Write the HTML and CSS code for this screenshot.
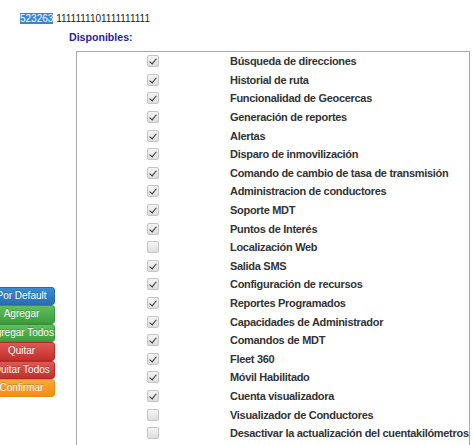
FILE: index.html
```html
<!DOCTYPE html>
<html>
<head>
<meta charset="utf-8">
<link rel="stylesheet" href="styles.css">
</head>
<body>
<div class="topline"><span class="sel">523263</span> 1111111101111111111</div>
<div class="title">Disponibles:</div>
<div class="main">
  <div class="btns">
    <div class="btn blue">Por Default</div>
    <div class="btn green">Agregar</div>
    <div class="btn green">Agregar Todos</div>
    <div class="btn red">Quitar</div>
    <div class="btn red">Quitar Todos</div>
    <div class="btn orange">Confirmar</div>
  </div>
  <div class="box">
    <div class="row"><span class="cb on"></span><span class="lbl">Búsqueda de direcciones</span></div>
    <div class="row"><span class="cb on"></span><span class="lbl">Historial de ruta</span></div>
    <div class="row"><span class="cb on"></span><span class="lbl">Funcionalidad de Geocercas</span></div>
    <div class="row"><span class="cb on"></span><span class="lbl">Generación de reportes</span></div>
    <div class="row"><span class="cb on"></span><span class="lbl">Alertas</span></div>
    <div class="row"><span class="cb on"></span><span class="lbl">Disparo de inmovilización</span></div>
    <div class="row"><span class="cb on"></span><span class="lbl">Comando de cambio de tasa de transmisión</span></div>
    <div class="row"><span class="cb on"></span><span class="lbl">Administracion de conductores</span></div>
    <div class="row"><span class="cb on"></span><span class="lbl">Soporte MDT</span></div>
    <div class="row"><span class="cb on"></span><span class="lbl">Puntos de Interés</span></div>
    <div class="row"><span class="cb"></span><span class="lbl">Localización Web</span></div>
    <div class="row"><span class="cb on"></span><span class="lbl">Salida SMS</span></div>
    <div class="row"><span class="cb on"></span><span class="lbl">Configuración de recursos</span></div>
    <div class="row"><span class="cb on"></span><span class="lbl">Reportes Programados</span></div>
    <div class="row"><span class="cb on"></span><span class="lbl">Capacidades de Administrador</span></div>
    <div class="row"><span class="cb on"></span><span class="lbl">Comandos de MDT</span></div>
    <div class="row"><span class="cb on"></span><span class="lbl">Fleet 360</span></div>
    <div class="row"><span class="cb on"></span><span class="lbl">Móvil Habilitado</span></div>
    <div class="row"><span class="cb on"></span><span class="lbl">Cuenta visualizadora</span></div>
    <div class="row"><span class="cb"></span><span class="lbl">Visualizador de Conductores</span></div>
    <div class="row"><span class="cb"></span><span class="lbl">Desactivar la actualización del cuentakilómetros</span></div>
  </div>
</div>
</body>
</html>
```
FILE: styles.css
```css
html, body {
  margin: 0;
  padding: 0;
  background: #fff;
  overflow: hidden;
}
body {
  font-family: "Liberation Sans", Arial, sans-serif;
  color: #333;
}
.topline {
  padding: 13px 0 0 20px;
  font-size: 10px;
  line-height: 12px;
  height: 12px;
  color: #222;
}
.sel {
  background: #3b83d8;
  color: #fff;
}
.title {
  margin: 6px 0 0 69px;
  font-size: 10.6px;
  font-weight: bold;
  color: #1f1fa6;
  line-height: 13px;
  height: 13px;
}
.main {
  display: flex;
  margin-top: 7px;
}
.btns {
  width: 67px;
  margin-left: -12px;
  margin-top: 236px;
  display: flex;
  flex-direction: column;
  flex: none;
}
.btn {
  margin-bottom: 0;
  text-align: center;
  font-size: 10px;
  color: #fff;
  border: 1px solid transparent;
  border-radius: 3px;
  box-sizing: border-box;
  height: 18.4px;
  line-height: 16px;
  white-space: nowrap;
  text-shadow: 0 -1px 0 rgba(0,0,0,0.2);
}
.blue { background: linear-gradient(#3d8bd0, #2a6fb3); border-color: #2b6aa6; }
.green { background: linear-gradient(#5fbf5f, #3e9e3e); border-color: #3c923c; }
.red { background: linear-gradient(#e05753, #c2302c); border-color: #b52b27; }
.orange { background: linear-gradient(#f7a93c, #ef8f12); border-color: #e38d13; }
.box {
  margin-left: 21px;
  width: 394px;
  height: 420px;
  border: 1px solid #a9a9a9;
  border-bottom: none;
  box-sizing: border-box;
  flex: none;
}
.row {
  display: flex;
  align-items: center;
  height: 18.6px;
}
.cb {
  width: 10px;
  height: 10px;
  margin-left: 70px;
  margin-right: 71px;
  border: 1px solid #c4c4c4;
  border-radius: 2px;
  background: linear-gradient(#f4f4f4, #dedede);
  position: relative;
  flex: none;
}
.cb.on::after {
  content: "";
  position: absolute;
  left: 3px;
  top: 1px;
  width: 3px;
  height: 6px;
  border: solid #333;
  border-width: 0 1.7px 1.7px 0;
  transform: rotate(40deg);
}
.lbl {
  font-size: 11px;
  font-weight: bold;
  color: #333;
  white-space: nowrap;
  letter-spacing: -0.3px;
}
```
